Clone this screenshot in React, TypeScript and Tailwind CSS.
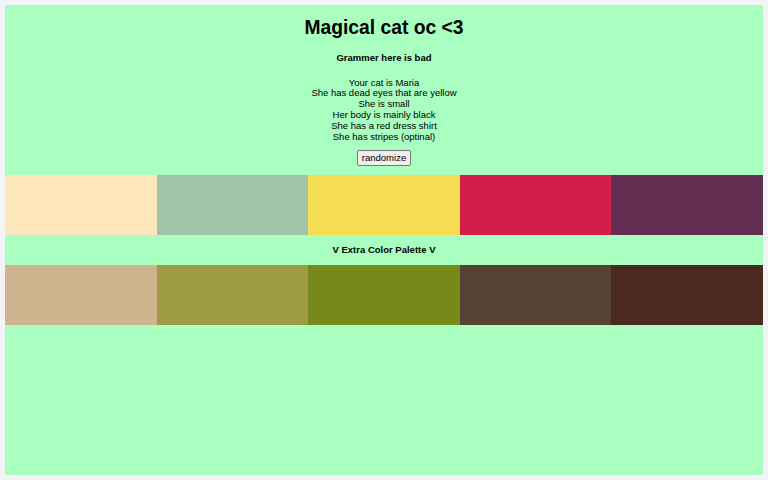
const palette = ['#fee6bd', '#a0c4aa', '#f5dd51', '#d31e4a', '#622f53']
const extra = ['#cfb490', '#9e9b42', '#768a1a', '#564233', '#4b2820']

const traits = [
  'Your cat is Maria',
  'She has dead eyes that are yellow',
  'She is small',
  'Her body is mainly black',
  'She has a red dress shirt',
  'She has stripes (optinal)',
]

function Swatches({ colors }: { colors: string[] }) {
  return (
    <div className="grid grid-cols-5 h-[60px]">
      {colors.map((c) => (
        <div key={c} style={{ backgroundColor: c }} />
      ))}
    </div>
  )
}

export default function App() {
  return (
    <div className="w-[768px] h-[480px] bg-[#f3f4f6] p-[5px] font-['Liberation_Sans',Arial,sans-serif] text-black">
      <div className="h-full bg-[#a8ffbf] flex flex-col">
        <h1 className="text-center font-bold text-[19.3px] leading-none mt-[13px]">Magical cat oc &lt;3</h1>
        <p className="text-center font-bold text-[9.5px] mt-[14px]">Grammer here is bad</p>
        <div className="text-center text-[9.5px] leading-[10.8px] mt-[12px]">
          {traits.map((t) => (
            <div key={t}>{t}</div>
          ))}
        </div>
        <div className="flex justify-center mt-[8px] mb-[9px]">
          <button className="text-[9.5px] leading-none px-[4px] py-[2px] bg-[#efefef] border border-[#767676] rounded-[2px]">
            randomize
          </button>
        </div>
        <Swatches colors={palette} />
        <p className="text-center font-bold text-[9.5px] h-[30px] leading-[30px]">V Extra Color Palette V</p>
        <Swatches colors={extra} />
      </div>
    </div>
  )
}
